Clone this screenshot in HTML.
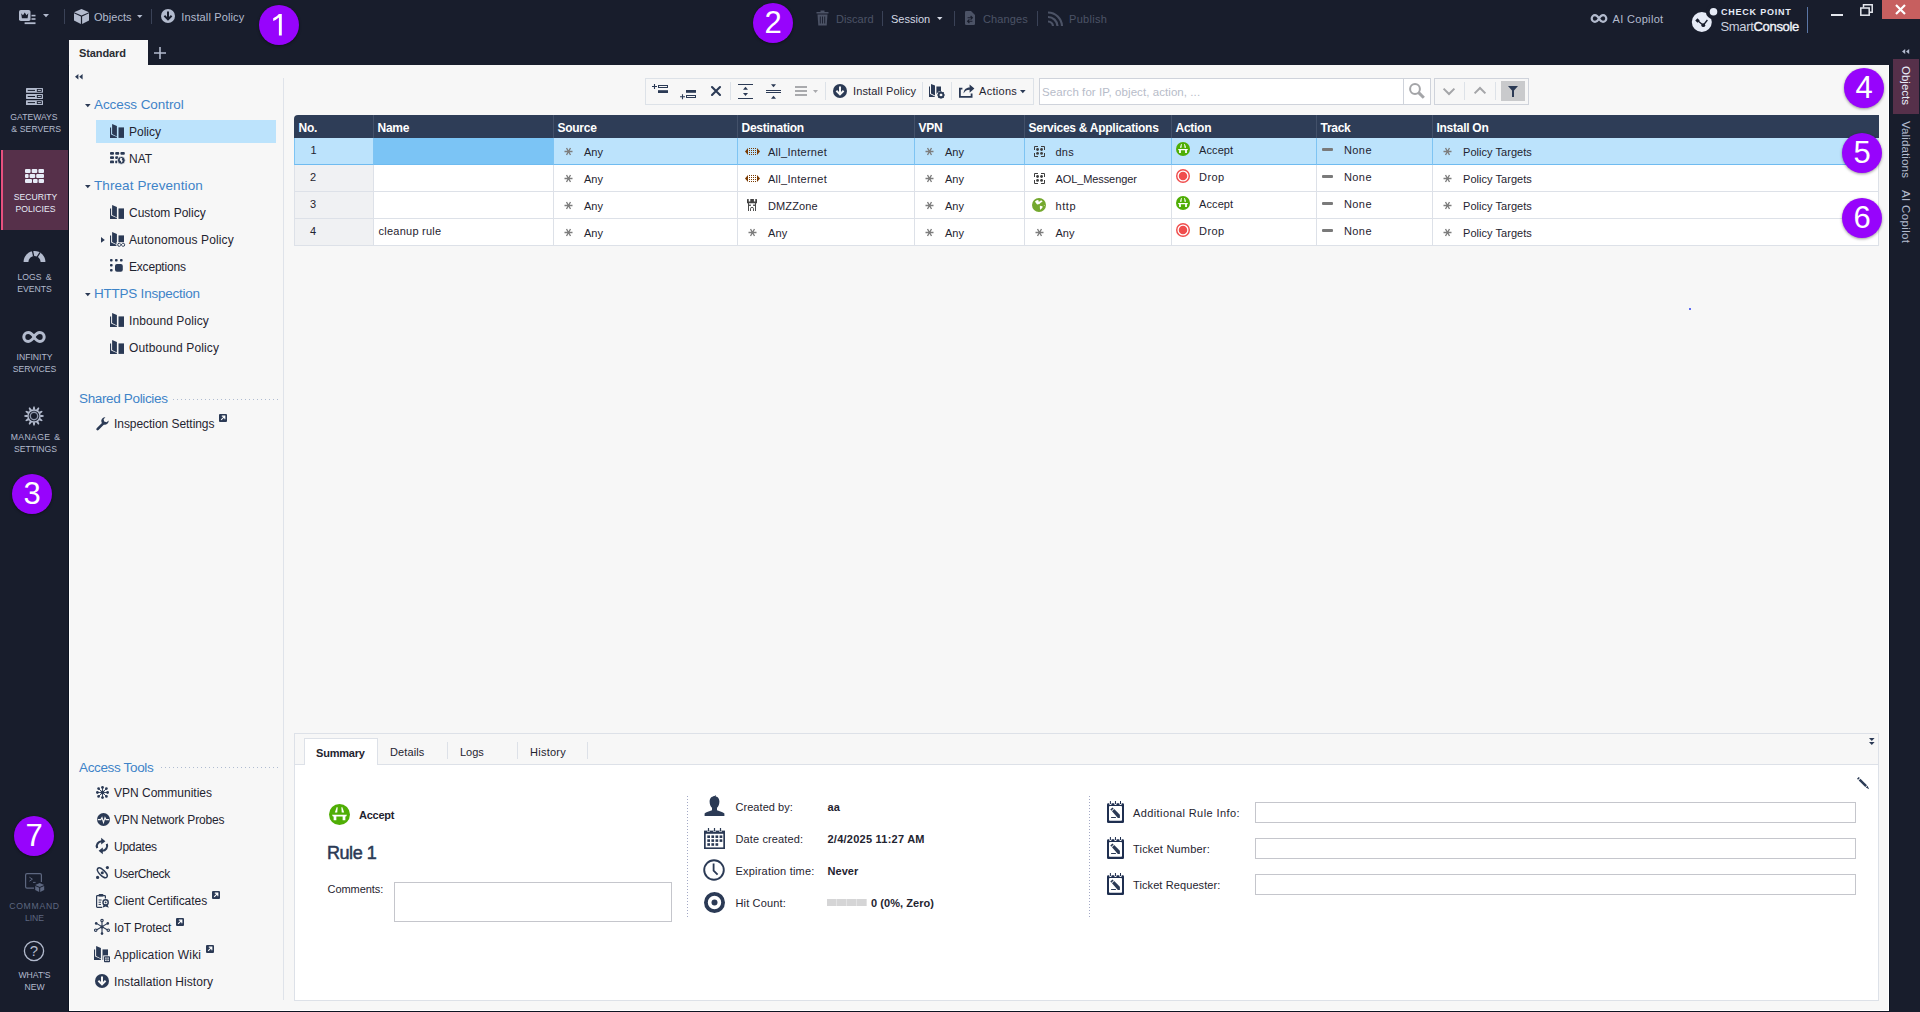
<!DOCTYPE html>
<html>
<head>
<meta charset="utf-8">
<title>SmartConsole</title>
<style>
*{box-sizing:border-box;margin:0;padding:0}
html,body{width:1920px;height:1012px;overflow:hidden}
body{background:#f7f7f7;font-family:"Liberation Sans",sans-serif;font-size:12px;color:#1f2430;position:relative}
.abs{position:absolute}
.t{position:absolute;white-space:nowrap;font-size:11px;line-height:14px;letter-spacing:0.05px}
svg{position:absolute;overflow:visible}
/* dark chrome */
#top{left:0;top:0;width:1920px;height:65px;background:#181d2c}
#left{left:0;top:65px;width:69px;height:947px;background:#181d2c}
#right{left:1889px;top:65px;width:31px;height:947px;background:#181d2c}
#bottom{left:69px;top:1011px;width:1820px;height:1px;background:#0d1422}
#wl{left:69px;top:65px;width:1px;height:946px;background:#fff}
#wb{left:69px;top:1010px;width:1820px;height:1px;background:#fff}
#wr{left:1888px;top:65px;width:1px;height:946px;background:#fff}
.vt{writing-mode:vertical-rl;font-size:11.5px;line-height:14px;white-space:nowrap;width:14px}
.tl{color:#b3bbce}
.td{color:#4c5366}
.vsep{position:absolute;width:1px;background:#3a4257}
.badge{position:absolute;width:40px;height:40px;border-radius:50%;background:#9704fc;color:#fff;font-size:31px;line-height:40px;text-align:center;box-shadow:0 1px 3px rgba(0,0,0,.4)}
/* sidebar */
.sb{position:absolute;left:0;width:69px;text-align:center;color:#b3bbce;font-size:9.6px;line-height:12px;letter-spacing:0;word-spacing:2px;white-space:nowrap;transform:scaleX(0.9);transform-origin:34.5px 0}
/* nav */
.hd{position:absolute;white-space:nowrap;color:#3e83c8;font-size:13.5px;line-height:16px;letter-spacing:0}
.ni{position:absolute;white-space:nowrap;color:#1f2430;font-size:12px;line-height:15px;letter-spacing:0}
.dots{position:absolute;height:1px;background-image:linear-gradient(to right,#b0bcd1 1px,transparent 1px);background-size:4px 1px}
/* table */
.th{position:absolute;top:115px;height:23px;background:#2e3d57;color:#fff;font-weight:bold;font-size:12px;line-height:23px;padding-left:4px;white-space:nowrap;letter-spacing:-0.3px;border-left:1px solid #44536c}
.cell{position:absolute;height:27px;background:#fff;border-left:1px solid #dde1e8;border-bottom:1px solid #dde1e8}
.sel .cell{background:#bce3fc;border-left-color:#7ec4f3;border-bottom-color:#6fbbf0}
.ct{position:absolute;white-space:nowrap;font-size:11px;line-height:14px;letter-spacing:0;color:#1f2430}
</style>
</head>
<body>
<div id="top" class="abs"></div>
<div id="left" class="abs"></div>
<div id="right" class="abs"></div>
<div id="bottom" class="abs"></div>
<div class="abs" style="left:68px;top:65px;width:1px;height:947px;background:#0d1422"></div><div class="abs" style="left:1889px;top:65px;width:1px;height:947px;background:#0d1422"></div><div id="wl" class="abs"></div><div id="wb" class="abs"></div><div id="wr" class="abs"></div>
<!-- top-left menu -->
<svg style="left:19px;top:10px" width="17" height="15" viewBox="0 0 17 15">
  <rect x="0" y="0" width="11.5" height="11" rx="1.8" fill="#b3bbce"/>
  <path d="M2.2 3.3L4 5.2L5.75 2.6L7.5 5.2L9.3 3.3L8.6 8.3H2.9Z" fill="#181d2c"/>
  <rect x="12.5" y="4.8" width="4" height="1.6" fill="#b3bbce"/>
  <rect x="12.5" y="8.2" width="4" height="1.6" fill="#b3bbce"/>
  <rect x="5.6" y="12.3" width="10.9" height="1.8" fill="#b3bbce"/>
</svg>
<svg style="left:43px;top:14px" width="6" height="4" viewBox="0 0 6 4"><path d="M0 0H6L3 3.2Z" fill="#b3bbce"/></svg>
<div class="vsep" style="left:64px;top:9px;height:15px"></div>
<svg style="left:74px;top:9px" width="15" height="15" viewBox="0 0 15 15">
  <path d="M7.5 0 L15 3.2 L7.5 6.6 L0 3.2 Z" fill="#b3bbce"/>
  <path d="M0 4.3 L6.9 7.5 L6.9 15 L0 11.6 Z" fill="#b3bbce"/>
  <path d="M15 4.3 L8.1 7.5 L8.1 15 L15 11.6 Z" fill="#b3bbce"/>
</svg>
<div class="t tl" style="left:94px;top:10px">Objects</div>
<svg style="left:137px;top:15px" width="6" height="4" viewBox="0 0 6 4"><path d="M0 0H5.5L2.75 3Z" fill="#b3bbce"/></svg>
<div class="vsep" style="left:151px;top:9px;height:15px"></div>
<svg style="left:161px;top:9px" width="14" height="14" viewBox="0 0 14 14">
  <circle cx="7" cy="7" r="7" fill="#b3bbce"/>
  <path d="M7 2.6V10.2M3.4 6.8L7 10.4L10.6 6.8" fill="none" stroke="#181d2c" stroke-width="2"/>
</svg>
<div class="t tl" style="left:181.3px;top:10px;letter-spacing:0.14px">Install Policy</div>
<!-- tab -->
<div class="abs" style="left:69px;top:40px;width:79px;height:26px;background:#f7f7f7"></div>
<div class="t" style="left:79px;top:46px;font-weight:bold;color:#2a2d33;letter-spacing:-0.1px">Standard</div>
<svg style="left:154px;top:47px" width="12" height="12" viewBox="0 0 12 12"><path d="M6 0V12M0 6H12" stroke="#b3bbce" stroke-width="1.6" fill="none"/></svg>
<!-- center -->
<svg style="left:816px;top:10px" width="13" height="16" viewBox="0 0 13 16">
  <path d="M4.5 0.5H8.5V2H12.5V3.6H0.5V2H4.5Z" fill="#4c5366"/>
  <path d="M1.5 4.6H11.5L10.7 15.5H2.3Z" fill="#4c5366"/>
  <path d="M4.3 6.5V13.5M6.5 6.5V13.5M8.7 6.5V13.5" stroke="#181d2c" stroke-width="0.9"/>
</svg>
<div class="t td" style="left:836px;top:12px">Discard</div>
<div class="vsep" style="left:882px;top:11px;height:15px"></div>
<div class="t" style="left:891px;top:12px;color:#d5d9e4;letter-spacing:0px">Session</div>
<svg style="left:937px;top:17px" width="6" height="4" viewBox="0 0 6 4"><path d="M0 0H5.5L2.75 3Z" fill="#d5d9e4"/></svg>
<div class="vsep" style="left:954px;top:11px;height:15px"></div>
<svg style="left:965px;top:11px" width="10" height="14" viewBox="0 0 10 14">
  <path d="M0 1.2Q0 0 1.2 0H6L10 4V12.8Q10 14 8.8 14H1.2Q0 14 0 12.8Z" fill="#4c5366"/>
  <path d="M2.6 6.8H7.4M5.6 5L7.4 6.8L5.6 8.6M7.4 10.2H2.6M4.4 8.4L2.6 10.2L4.4 12" stroke="#181d2c" stroke-width="1.1" fill="none"/>
</svg>
<div class="t td" style="left:983px;top:12px;letter-spacing:0.12px">Changes</div>
<div class="vsep" style="left:1037px;top:11px;height:15px"></div>
<svg style="left:1047px;top:11px" width="17" height="15" viewBox="0 0 17 15">
  <path d="M1 1.5 A14 14 0 0 1 15 15" stroke="#4c5366" stroke-width="2.2" fill="none"/>
  <path d="M1 6 A9.5 9.5 0 0 1 10.5 15" stroke="#4c5366" stroke-width="2.2" fill="none"/>
  <path d="M1 10.5 A5 5 0 0 1 6 15" stroke="#4c5366" stroke-width="2.2" fill="none"/>
</svg>
<div class="t td" style="left:1069px;top:12px;letter-spacing:0.3px">Publish</div>
<!-- right -->
<svg style="left:1591px;top:14px" width="16" height="9" viewBox="0 0 16 9">
  <path d="M8 4.5C6.5 2 5.5 1.2 4 1.2A3.3 3.3 0 0 0 4 7.8C5.5 7.8 6.5 7 8 4.5C9.5 2 10.5 1.2 12 1.2A3.3 3.3 0 0 1 12 7.8C10.5 7.8 9.5 7 8 4.5Z" fill="none" stroke="#b3bbce" stroke-width="2.2"/>
</svg>
<div class="t tl" style="left:1612.5px;top:12px;letter-spacing:0.33px">AI Copilot</div>
<svg style="left:1691px;top:7px" width="27" height="27" viewBox="0 0 27 27">
  <circle cx="10.8" cy="15" r="10" fill="#e6ebf7"/>
  <circle cx="22.5" cy="4.7" r="7.6" fill="#181d2c"/>
  <circle cx="22.5" cy="4.7" r="3.8" fill="#e6ebf7"/>
  <path d="M6.5 13.4L12.3 18.2L16.4 13" stroke="#181d2c" stroke-width="1.3" fill="none"/>
  <rect x="4.9" y="11.8" width="3.2" height="3.2" transform="rotate(45 6.5 13.4)" fill="#181d2c"/><circle cx="12.3" cy="18.2" r="1.9" fill="#181d2c"/>
</svg>
<div class="t" style="left:1721px;top:6px;color:#e6ebf7;font-weight:bold;font-size:9px;line-height:12px;letter-spacing:0.78px">CHECK POINT</div>
<div class="t" style="left:1720.5px;top:18.5px;color:#c9cfde;font-size:13px;line-height:16px;letter-spacing:-0.33px">Smart<span style="color:#f1f4fa;-webkit-text-stroke:0.35px #f1f4fa">Console</span></div>
<div class="vsep" style="left:1807px;top:7px;height:26px;background:#5a76a6"></div>
<div class="abs" style="left:1831px;top:14px;width:12px;height:2px;background:#e4e7ee"></div>
<svg style="left:1860px;top:4px" width="13" height="12" viewBox="0 0 13 12"><path d="M3.5 3.5V0.8H12.2V8.2H9.2" fill="none" stroke="#e4e7ee" stroke-width="1.5"/><rect x="0.8" y="4" width="8.4" height="7.2" fill="none" stroke="#e4e7ee" stroke-width="1.5"/></svg>
<div class="abs" style="left:1882px;top:0;width:38px;height:19px;background:#c75f5f"></div>
<svg style="left:1895px;top:4px" width="11" height="11" viewBox="0 0 11 11"><path d="M1 1L10 10M10 1L1 10" stroke="#fff" stroke-width="2.2"/></svg>

<!-- gateways -->
<svg style="left:26px;top:88px" width="17" height="17" viewBox="0 0 17 17">
  <g fill="#b3bbce"><rect x="0" y="0" width="17" height="4.8" rx="0.6"/><rect x="0" y="6.1" width="17" height="4.8" rx="0.6"/><rect x="0" y="12.2" width="17" height="4.8" rx="0.6"/></g>
  <g fill="#181d2c"><rect x="1.7" y="1.9" width="7.3" height="1"/><rect x="1.7" y="8" width="7.3" height="1"/><rect x="1.7" y="14.1" width="7.3" height="1"/></g>
  <g fill="none" stroke="#181d2c" stroke-width="0.9"><rect x="11.3" y="1.4" width="4" height="2"/><rect x="11.3" y="7.5" width="4" height="2"/><rect x="11.3" y="13.6" width="4" height="2"/></g>
</svg>
<div class="sb" style="top:111px;left:-0.5px"><span style="position:relative;left:-0.6px">GATEWAYS</span><br><span style="word-spacing:0.5px;position:relative;left:1.8px">&amp; SERVERS</span></div>
<!-- security policies (active) -->
<div class="abs" style="left:1px;top:150px;width:67px;height:80px;background:#56304a"></div>
<div class="abs" style="left:1px;top:150px;width:2px;height:80px;background:#e8507f"></div>
<svg style="left:25px;top:169px" width="19" height="14" viewBox="0 0 19 14">
  <g fill="#e6ebf7"><rect x="0" y="0" width="5.6" height="4" rx="1"/><rect x="6.7" y="0" width="5.6" height="4" rx="1"/><rect x="13.4" y="0" width="5.6" height="4" rx="1"/>
  <rect x="0" y="5" width="3.6" height="4" rx="1"/><rect x="4.6" y="5" width="5.6" height="4" rx="1"/><rect x="11.2" y="5" width="7.8" height="4" rx="1"/>
  <rect x="0" y="10" width="7" height="4" rx="1"/><rect x="8" y="10" width="4.6" height="4" rx="1"/><rect x="13.6" y="10" width="5.4" height="4" rx="1"/></g>
</svg>
<div class="sb" style="top:191px;left:1px;color:#e6ebf7">SECURITY<br>POLICIES</div>
<!-- logs -->
<svg style="left:23px;top:250px" width="23" height="12" viewBox="0 0 23 12">
  <path d="M0.6 12 A10.9 10.9 0 0 1 22.4 12 L17.6 12 A6.1 6.1 0 0 0 5.4 12 Z" fill="#b3bbce"/>
  <path d="M9.3 0L10.7 6.5M17 2.5L14.2 7" stroke="#181d2c" stroke-width="1.3"/>
</svg>
<div class="sb" style="top:271px">LOGS &amp;<br>EVENTS</div>
<!-- infinity -->
<svg style="left:22px;top:331px" width="24" height="12" viewBox="0 0 24 12">
  <path d="M12 6C9.8 2.6 8.3 1.6 6.2 1.6A4.4 4.4 0 0 0 6.2 10.4C8.3 10.4 9.8 9.4 12 6C14.2 2.6 15.7 1.6 17.8 1.6A4.4 4.4 0 0 1 17.8 10.4C15.7 10.4 14.2 9.4 12 6Z" fill="none" stroke="#b3bbce" stroke-width="3"/>
</svg>
<div class="sb" style="top:351px">INFINITY<br>SERVICES</div>
<!-- manage -->
<svg style="left:24px;top:406px" width="20" height="20" viewBox="-10 -10 20 20">
  <g fill="#b3bbce"><path d="M-1.25 -6.2L-0.65 -9.6H0.65L1.25 -6.2Z" transform="rotate(0)"/><path d="M-1.25 -6.2L-0.65 -9.6H0.65L1.25 -6.2Z" transform="rotate(30)"/><path d="M-1.25 -6.2L-0.65 -9.6H0.65L1.25 -6.2Z" transform="rotate(60)"/><path d="M-1.25 -6.2L-0.65 -9.6H0.65L1.25 -6.2Z" transform="rotate(90)"/><path d="M-1.25 -6.2L-0.65 -9.6H0.65L1.25 -6.2Z" transform="rotate(120)"/><path d="M-1.25 -6.2L-0.65 -9.6H0.65L1.25 -6.2Z" transform="rotate(150)"/><path d="M-1.25 -6.2L-0.65 -9.6H0.65L1.25 -6.2Z" transform="rotate(180)"/><path d="M-1.25 -6.2L-0.65 -9.6H0.65L1.25 -6.2Z" transform="rotate(210)"/><path d="M-1.25 -6.2L-0.65 -9.6H0.65L1.25 -6.2Z" transform="rotate(240)"/><path d="M-1.25 -6.2L-0.65 -9.6H0.65L1.25 -6.2Z" transform="rotate(270)"/><path d="M-1.25 -6.2L-0.65 -9.6H0.65L1.25 -6.2Z" transform="rotate(300)"/><path d="M-1.25 -6.2L-0.65 -9.6H0.65L1.25 -6.2Z" transform="rotate(330)"/></g>
  <circle r="6" fill="none" stroke="#b3bbce" stroke-width="1.3"/>
  <circle r="3.7" fill="none" stroke="#8e96aa" stroke-width="1.4"/>
</svg>
<div class="sb" style="top:431px;left:0.5px"><span style="word-spacing:1px;letter-spacing:0.45px">MANAGE &amp;</span><br>SETTINGS</div>
<!-- command line -->
<svg style="left:25px;top:873px" width="20" height="20" viewBox="0 0 20 20">
  <path d="M9 15.2H2Q0.6 15.2 0.6 13.8V2Q0.6 0.6 2 0.6H15Q16.4 0.6 16.4 2V9" fill="none" stroke="#5d6780" stroke-width="1.2"/>
  <path d="M4.4 4.2L7.4 6.2L4.4 8.2M8 9.4H10.6" fill="none" stroke="#5d6780" stroke-width="1"/>
  <path d="M14.7 10L19.2 12L14.7 14L10.2 12Z" fill="#5d6780"/><path d="M10.2 12.9L14.2 14.8V19L10.2 17Z" fill="#5d6780"/><path d="M19.2 12.9L15.2 14.8V19L19.2 17Z" fill="#5d6780"/>
</svg>
<div class="sb" style="top:900px;left:-0.5px;color:#5d6780"><span style="letter-spacing:0.8px">COMMAND</span><br>LINE</div>
<!-- whats new -->
<svg style="left:23px;top:940px" width="22" height="22" viewBox="0 0 22 22">
  <circle cx="11" cy="11" r="9.6" fill="none" stroke="#b3bbce" stroke-width="1.3"/>
</svg>
<div class="abs" style="left:23px;top:942px;width:22px;text-align:center;color:#b3bbce;font-size:15px;line-height:18px">?</div>
<div class="sb" style="top:969px">WHAT'S<br>NEW</div>

<svg width="0" height="0" style="left:0;top:0"><defs>
  <g id="book"><path d="M0 3.4H1.1V10.4L6.9 13.1V13.9H0Z"/><path d="M2.1 0L6.9 2V12.4L2.1 10.1Z"/><rect x="8.5" y="3.4" width="5.5" height="10.5"/></g>
  <g id="ext"><rect x="0" y="0" width="7.4" height="7.4" rx="1" fill="#2b3a55"/><path d="M2 5.4L5.2 2.2M2.6 2H5.4V4.8" fill="none" stroke="#fff" stroke-width="1"/></g>
  <g id="dl"><circle cx="7" cy="7" r="7"/><path d="M7 2.6V10.2M3.4 6.8L7 10.4L10.6 6.8" fill="none" stroke="#f7f7f7" stroke-width="2"/></g>
</defs></svg>
<div class="abs" style="left:283px;top:78px;width:1px;height:922px;background:#dfe3ea"></div>
<svg style="left:75px;top:74px" width="8" height="6" viewBox="0 0 8 6"><path d="M3.4 0V5.4L0 2.7ZM7.6 0V5.4L4.2 2.7Z" fill="#2b3a55"/></svg>
<!-- Access Control -->
<svg style="left:85px;top:104px" width="6" height="4" viewBox="0 0 6 4"><path d="M0 0H5.6L2.8 3.2Z" fill="#2b3a55"/></svg>
<div class="hd" style="left:94px;top:97px;letter-spacing:-0.08px">Access Control</div>
<div class="abs" style="left:96px;top:120px;width:180px;height:23px;background:#bce3fc"></div>
<svg style="left:110px;top:124px" width="14" height="14" viewBox="0 0 14 14" fill="#2b3a55"><use href="#book"/></svg>
<div class="ni" style="left:129px;top:125px">Policy</div>
<svg style="left:110px;top:152px" width="15" height="13" viewBox="0 0 15 13" fill="#2b3a55">
  <rect x="0" y="0" width="4" height="2.7" rx="0.9"/><rect x="5.2" y="0" width="4" height="2.7" rx="0.9"/><rect x="10.4" y="0" width="4.4" height="2.7" rx="0.9"/>
  <rect x="0" y="4.3" width="4" height="2.7" rx="0.9"/><rect x="5.2" y="4.3" width="3" height="2.7" rx="0.9"/>
  <rect x="0" y="8.6" width="4" height="2.7" rx="0.9"/><rect x="5.2" y="8.6" width="2" height="2.7" rx="0.9"/>
  <circle cx="11.3" cy="8.3" r="3.9" stroke="#f7f7f7" stroke-width="0.7"/>
  <path d="M10.6 5.6L12.3 6.4L11.7 7.8L12.8 8.8L11.6 11L10.8 9L9.6 8.2Z" fill="#f7f7f7"/>
</svg>
<div class="ni" style="left:129px;top:152px">NAT</div>
<!-- Threat Prevention -->
<svg style="left:85px;top:185px" width="6" height="4" viewBox="0 0 6 4"><path d="M0 0H5.6L2.8 3.2Z" fill="#2b3a55"/></svg>
<div class="hd" style="left:94px;top:178px;letter-spacing:0.09px">Threat Prevention</div>
<svg style="left:110px;top:205px" width="14" height="14" viewBox="0 0 14 14" fill="#2b3a55"><use href="#book"/></svg>
<div class="ni" style="left:129px;top:206px">Custom Policy</div>
<svg style="left:101px;top:237px" width="4" height="6" viewBox="0 0 4 6"><path d="M0 0L3.8 2.9L0 5.8Z" fill="#2b3a55"/></svg>
<svg style="left:110px;top:232px" width="16" height="15" viewBox="0 0 16 15" fill="#2b3a55"><use href="#book"/>
  <rect x="6.5" y="10.2" width="9.5" height="5" fill="#f7f7f7"/>
  <path d="M11.2 12.8C10.4 11.6 9.9 11.3 9.2 11.3A1.5 1.5 0 0 0 9.2 14.3C9.9 14.3 10.4 14 11.2 12.8C12 11.6 12.5 11.3 13.2 11.3A1.5 1.5 0 0 1 13.2 14.3C12.5 14.3 12 14 11.2 12.8Z" fill="none" stroke="#2b3a55" stroke-width="1"/>
</svg>
<div class="ni" style="left:129px;top:233px;letter-spacing:0.12px">Autonomous Policy</div>
<svg style="left:110px;top:259px" width="13" height="13" viewBox="0 0 13 13" fill="#2b3a55">
  <rect x="0" y="0" width="2.6" height="2.6" rx="0.8"/><rect x="5" y="0" width="2.6" height="2.6" rx="0.8"/><rect x="10" y="0" width="2.6" height="2.6" rx="0.8"/>
  <rect x="0" y="5" width="2.6" height="2.6" rx="0.8"/><rect x="0" y="10" width="2.6" height="2.6" rx="0.8"/>
  <rect x="5" y="5" width="7.8" height="7.8" rx="2"/>
</svg>
<div class="ni" style="left:129px;top:260px;letter-spacing:-0.2px">Exceptions</div>
<!-- HTTPS Inspection -->
<svg style="left:85px;top:293px" width="6" height="4" viewBox="0 0 6 4"><path d="M0 0H5.6L2.8 3.2Z" fill="#2b3a55"/></svg>
<div class="hd" style="left:94px;top:286px;letter-spacing:-0.23px">HTTPS Inspection</div>
<svg style="left:110px;top:313px" width="14" height="14" viewBox="0 0 14 14" fill="#2b3a55"><use href="#book"/></svg>
<div class="ni" style="left:129px;top:314px;letter-spacing:0.08px">Inbound Policy</div>
<svg style="left:110px;top:340px" width="14" height="14" viewBox="0 0 14 14" fill="#2b3a55"><use href="#book"/></svg>
<div class="ni" style="left:129px;top:341px;letter-spacing:0.14px">Outbound Policy</div>
<!-- Shared Policies -->
<div class="hd" style="left:79px;top:391px;letter-spacing:-0.35px">Shared Policies</div>
<div class="dots" style="left:173px;top:399px;width:106px"></div>
<svg style="left:96px;top:417px" width="13" height="14" viewBox="0 0 13 14">
  <path d="M1.6 12.2L7.6 6.2" stroke="#2b3a55" stroke-width="2.6" stroke-linecap="round"/>
  <path d="M12.6 3.4A3.7 3.7 0 1 1 9.4 0.3L7.6 2.2L8.2 4.6L10.6 5.2Z" fill="#2b3a55"/>
</svg>
<div class="ni" style="left:114px;top:417px;letter-spacing:-0.05px">Inspection Settings</div>
<svg style="left:218.5px;top:414px" width="8" height="8" viewBox="0 0 7.4 7.4"><use href="#ext"/></svg>
<!-- Access Tools -->
<div class="hd" style="left:79px;top:760px;letter-spacing:-0.35px">Access Tools</div>
<div class="dots" style="left:161px;top:767px;width:118px"></div>
<svg style="left:96px;top:786px" width="13" height="13" viewBox="-6.5 -6.5 13 13">
  <g stroke="#2b3a55" stroke-width="0.9"><path d="M-5 0H5M0 -5V5M-3.6 -3.6L3.6 3.6M-3.6 3.6L3.6 -3.6"/></g>
  <g fill="#2b3a55"><rect x="-1.7" y="-1.7" width="3.4" height="3.4" rx="0.8"/><circle cx="0" cy="-5.1" r="1.4"/><circle cx="0" cy="5.1" r="1.4"/><circle cx="-5.1" cy="0" r="1.4"/><circle cx="5.1" cy="0" r="1.4"/><circle cx="-3.9" cy="-3.9" r="1.35"/><circle cx="3.9" cy="3.9" r="1.35"/><circle cx="-3.9" cy="3.9" r="1.35"/><circle cx="3.9" cy="-3.9" r="1.35"/></g>
</svg>
<div class="ni" style="left:114px;top:786px">VPN Communities</div>
<svg style="left:96.5px;top:812.5px" width="13" height="13" viewBox="0 0 13 13"><circle cx="6.5" cy="6.5" r="6.5" fill="#2b3a55"/><path d="M0.8 6.6H3.8L5 4.6L6.5 9.4L8 4.6L9 6.6H12.2" fill="none" stroke="#f7f7f7" stroke-width="1.1"/></svg>
<div class="ni" style="left:114px;top:813px;letter-spacing:-0.17px">VPN Network Probes</div>
<svg style="left:96px;top:838px" width="12" height="16" viewBox="0 0 12 16">
  <path d="M1.2 10.2A5 5 0 0 1 6 3.2" fill="none" stroke="#2b3a55" stroke-width="2.1"/><path d="M5.2 -0.2L9.4 3.2L5.2 6.6Z" fill="#2b3a55"/>
  <path d="M10.8 5.8A5 5 0 0 1 6 12.8" fill="none" stroke="#2b3a55" stroke-width="2.1"/><path d="M6.8 9.4L2.6 12.8L6.8 16.2Z" fill="#2b3a55"/>
</svg>
<div class="ni" style="left:114px;top:840px;letter-spacing:-0.27px">Updates</div>
<svg style="left:96px;top:866px" width="13" height="13" viewBox="0 0 13 13">
  <ellipse cx="6.3" cy="6.8" rx="2.7" ry="6.3" transform="rotate(-45 6.3 6.8)" fill="none" stroke="#2b3a55" stroke-width="1.5"/>
  <circle cx="6.3" cy="6.8" r="1.5" fill="#2b3a55"/><circle cx="11.4" cy="1.6" r="1.6" fill="#2b3a55"/><circle cx="1.6" cy="11.4" r="1.6" fill="#2b3a55"/>
</svg>
<div class="ni" style="left:114px;top:867px;letter-spacing:-0.4px">UserCheck</div>
<svg style="left:96px;top:894px" width="14" height="14" viewBox="0 0 14 14">
  <path d="M6 13.4H1.4Q0.6 13.4 0.6 12.6V2.4Q0.6 1.6 1.4 1.6H8.6Q9.4 1.6 9.4 2.4V4.6" fill="none" stroke="#2b3a55" stroke-width="1.2"/>
  <rect x="2.6" y="0" width="4.8" height="2.6" rx="0.8" fill="#2b3a55"/>
  <path d="M2.6 6H5.6M2.6 8.2H5M2.6 10.4H5" stroke="#2b3a55" stroke-width="1"/>
  <circle cx="9.6" cy="8.4" r="2.6" fill="none" stroke="#2b3a55" stroke-width="1.4"/><circle cx="9.6" cy="8.4" r="0.9" fill="#2b3a55"/>
  <path d="M7.8 10.6L6.4 13.8L9.6 12.4L12.8 13.8L11.4 10.6" fill="#2b3a55"/>
</svg>
<div class="ni" style="left:114px;top:894px;letter-spacing:-0.05px">Client Certificates</div>
<svg style="left:212px;top:891px" width="8" height="8" viewBox="0 0 7.4 7.4"><use href="#ext"/></svg>
<svg style="left:94px;top:919px" width="16" height="16" viewBox="-8 -8 16 16">
  <g stroke="#2b3a55" stroke-width="1.1" fill="none"><path d="M0 -5.6V6M-5.6 -3.6L5.6 3M5.6 -3.6L-5.6 3"/><circle cx="0" cy="-6.4" r="1.2" fill="#f7f7f7"/><circle cx="-6.3" cy="3.2" r="1.2" fill="#f7f7f7"/><circle cx="6.3" cy="3.2" r="1.2" fill="#f7f7f7"/></g>
  <g fill="#2b3a55"><circle r="1.6"/><circle cx="0" cy="6.6" r="1.3"/><circle cx="-5.8" cy="-3.6" r="1.3"/><circle cx="5.8" cy="-3.6" r="1.3"/></g>
</svg>
<div class="ni" style="left:114px;top:921px;letter-spacing:-0.12px">IoT Protect</div>
<svg style="left:176px;top:918px" width="8" height="8" viewBox="0 0 7.4 7.4"><use href="#ext"/></svg>
<svg style="left:94px;top:946px" width="16" height="16" viewBox="0 0 16 16" fill="#2b3a55"><use href="#book"/>
  <rect x="9.2" y="9.4" width="7" height="7" fill="#f7f7f7"/><rect x="10" y="10.2" width="6" height="6" rx="0.8"/>
  <path d="M11.2 11.4H12.6V12.8H11.2ZM13.4 11.4H14.8V12.8H13.4ZM11.2 13.6H12.6V15H11.2ZM13.4 13.6H14.8V15H13.4Z" fill="#f7f7f7"/>
</svg>
<div class="ni" style="left:114px;top:948px;letter-spacing:0.15px">Application Wiki</div>
<svg style="left:206px;top:945px" width="8" height="8" viewBox="0 0 7.4 7.4"><use href="#ext"/></svg>
<svg style="left:95px;top:974px" width="14" height="14" viewBox="0 0 14 14" fill="#2b3a55"><use href="#dl"/></svg>
<div class="ni" style="left:114px;top:975px;letter-spacing:0.05px">Installation History</div>

<div class="abs" style="left:645px;top:78px;width:389px;height:27px;border:1px solid #dde2e8"></div>
<svg style="left:652px;top:84px" width="16" height="10" viewBox="0 0 16 10">
  <path d="M2.5 0V5M0 2.5H5" stroke="#2b3a55" stroke-width="1.1" fill="none"/>
  <rect x="6.5" y="1.5" width="9" height="2" fill="none" stroke="#2b3a55" stroke-width="1"/>
  <rect x="6" y="6.2" width="10" height="2.8" fill="#2b3a55"/>
</svg>
<svg style="left:680px;top:90px" width="16" height="10" viewBox="0 0 16 10">
  <rect x="6" y="0" width="10" height="2.8" fill="#2b3a55"/>
  <rect x="6.5" y="5.5" width="9" height="2" fill="none" stroke="#2b3a55" stroke-width="1"/>
  <path d="M2.5 4.2V9.2M0 6.7H5" stroke="#2b3a55" stroke-width="1.1" fill="none"/>
</svg>
<svg style="left:711px;top:86px" width="10" height="10" viewBox="0 0 10 10"><path d="M1 1L9 9M9 1L1 9" stroke="#2b3a55" stroke-width="2.1" stroke-linecap="round"/></svg>
<div class="abs" style="left:730px;top:82px;width:1px;height:18px;background:#dde2e8"></div>
<svg style="left:738px;top:84px" width="15" height="15" viewBox="0 0 15 15" fill="#2b3a55">
  <rect x="0" y="0" width="15" height="1"/><rect x="0" y="14" width="15" height="1"/>
  <path d="M7.5 2.8L10 5.8H5Z"/><path d="M7.5 12L10 9H5Z"/>
</svg>
<svg style="left:766px;top:84px" width="15" height="15" viewBox="0 0 15 15" fill="#2b3a55">
  <rect x="0" y="6" width="15" height="1"/><rect x="0" y="8" width="15" height="1"/>
  <path d="M7.5 3.2L10 0.2H5Z"/><path d="M7.5 11.8L10 14.8H5Z"/>
</svg>
<svg style="left:795px;top:86px" width="24" height="10" viewBox="0 0 24 10" fill="#a9aaad">
  <rect x="0" y="0" width="12" height="2"/><rect x="0" y="4" width="12" height="2"/><rect x="0" y="8" width="12" height="2"/>
  <path d="M18 4H23L20.5 7Z"/>
</svg>
<div class="abs" style="left:825px;top:82px;width:1px;height:18px;background:#dde2e8"></div>
<svg style="left:833px;top:84px" width="14" height="14" viewBox="0 0 14 14" fill="#2b3a55"><use href="#dl"/></svg>
<div class="t" style="left:853px;top:84px;letter-spacing:0.15px">Install Policy</div>
<div class="abs" style="left:922px;top:82px;width:1px;height:18px;background:#dde2e8"></div>
<svg style="left:929px;top:84px" width="16" height="15" viewBox="0 0 16 15" fill="#2b3a55">
  <path d="M0 2.6H1V10L6 12.4V13H0Z"/><path d="M2 0L6 1.6V11.4L2 9.4Z"/><path d="M7.4 2.6H12V7.4H9.6L7.4 10Z"/>
  <circle cx="12" cy="11" r="2.6" fill="none" stroke="#2b3a55" stroke-width="1.5"/>
  <path d="M12 7.2V14.8M8.2 11H15.8M9.3 8.3L14.7 13.7M14.7 8.3L9.3 13.7" stroke="#2b3a55" stroke-width="1.1"/>
  <circle cx="12" cy="11" r="1.3" fill="#f7f7f7"/>
</svg>
<div class="abs" style="left:951px;top:82px;width:1px;height:18px;background:#dde2e8"></div>
<svg style="left:959px;top:84px" width="16" height="14" viewBox="0 0 16 14">
  <path d="M3.4 4.6H0.9V12.9H12.6V9.4" fill="none" stroke="#2b3a55" stroke-width="1.8"/>
  <path d="M4.6 9.6C4.6 5.6 7 3.4 10.6 3.4V0.4L15.4 4.6L10.6 8.8V5.8C8 5.8 6 6.8 4.6 9.6Z" fill="#2b3a55"/>
</svg>
<div class="t" style="left:979px;top:84px;letter-spacing:0.3px">Actions</div>
<svg style="left:1020px;top:90px" width="6" height="4" viewBox="0 0 6 4"><path d="M0 0H5.6L2.8 3.2Z" fill="#2b3a55"/></svg>
<!-- search -->
<div class="abs" style="left:1039px;top:78px;width:392px;height:27px;border:1px solid #cfd3db;background:#fff"></div>
<div class="abs" style="left:1403px;top:79px;width:1px;height:25px;background:#cfd3db"></div>
<div class="t" style="left:1042px;top:84.5px;font-size:11.5px;color:#b7bcc9;letter-spacing:0.07px">Search for IP, object, action, ...</div>
<svg style="left:1409px;top:83px" width="16" height="16" viewBox="0 0 16 16">
  <circle cx="6" cy="6" r="4.9" fill="none" stroke="#a4a5a8" stroke-width="2"/><path d="M9.4 9.4L14.8 14.8" stroke="#a4a5a8" stroke-width="3"/>
</svg>
<div class="abs" style="left:1434px;top:78px;width:95px;height:27px;border:1px solid #cfd3db"></div>
<svg style="left:1443px;top:88px" width="12" height="7" viewBox="0 0 12 7"><path d="M0.6 0.6L6 6L11.4 0.6" fill="none" stroke="#a4a5a8" stroke-width="2"/></svg>
<div class="abs" style="left:1464px;top:82px;width:1px;height:18px;background:#dde2e8"></div>
<svg style="left:1474px;top:87px" width="12" height="7" viewBox="0 0 12 7"><path d="M0.6 6.4L6 1L11.4 6.4" fill="none" stroke="#a4a5a8" stroke-width="2"/></svg>
<div class="abs" style="left:1495px;top:82px;width:1px;height:18px;background:#dde2e8"></div>
<div class="abs" style="left:1501px;top:81px;width:24px;height:20px;background:#c9cacc"></div>
<svg style="left:1508px;top:86px" width="10" height="11" viewBox="0 0 10 11"><path d="M0 0H10L6 4.6V11H4V4.6Z" fill="#2b3a55"/></svg>

<!--TABLE_START--><div class="abs" style="left:294px;top:115px;width:1585px;height:23px;background:#2e3d57;border-radius:4px 0 0 0"></div>
<div class="t" style="left:298.5px;top:120.5px;color:#fff;font-weight:bold;font-size:12px;line-height:15px;letter-spacing:-0.27px">No.</div>
<div class="abs" style="left:373px;top:115px;width:1px;height:23px;background:#43516a"></div><div class="t" style="left:377.5px;top:120.5px;color:#fff;font-weight:bold;font-size:12px;line-height:15px;letter-spacing:-0.27px">Name</div>
<div class="abs" style="left:553px;top:115px;width:1px;height:23px;background:#43516a"></div><div class="t" style="left:557.5px;top:120.5px;color:#fff;font-weight:bold;font-size:12px;line-height:15px;letter-spacing:-0.27px">Source</div>
<div class="abs" style="left:737px;top:115px;width:1px;height:23px;background:#43516a"></div><div class="t" style="left:741.5px;top:120.5px;color:#fff;font-weight:bold;font-size:12px;line-height:15px;letter-spacing:-0.27px">Destination</div>
<div class="abs" style="left:914px;top:115px;width:1px;height:23px;background:#43516a"></div><div class="t" style="left:918.5px;top:120.5px;color:#fff;font-weight:bold;font-size:12px;line-height:15px;letter-spacing:-0.27px">VPN</div>
<div class="abs" style="left:1024px;top:115px;width:1px;height:23px;background:#43516a"></div><div class="t" style="left:1028.5px;top:120.5px;color:#fff;font-weight:bold;font-size:12px;line-height:15px;letter-spacing:-0.27px">Services &amp; Applications</div>
<div class="abs" style="left:1171px;top:115px;width:1px;height:23px;background:#43516a"></div><div class="t" style="left:1175.5px;top:120.5px;color:#fff;font-weight:bold;font-size:12px;line-height:15px;letter-spacing:-0.27px">Action</div>
<div class="abs" style="left:1316px;top:115px;width:1px;height:23px;background:#43516a"></div><div class="t" style="left:1320.5px;top:120.5px;color:#fff;font-weight:bold;font-size:12px;line-height:15px;letter-spacing:-0.27px">Track</div>
<div class="abs" style="left:1432px;top:115px;width:1px;height:23px;background:#43516a"></div><div class="t" style="left:1436.5px;top:120.5px;color:#fff;font-weight:bold;font-size:12px;line-height:15px;letter-spacing:-0.27px">Install On</div>
<div class="sel">
<div class="cell" style="left:294px;top:138px;width:79px;background:#bce3fc"></div>
<div class="cell" style="left:373px;top:138px;width:180px;background:#7bc4f5"></div>
<div class="cell" style="left:553px;top:138px;width:184px;"></div>
<div class="cell" style="left:737px;top:138px;width:177px;"></div>
<div class="cell" style="left:914px;top:138px;width:110px;"></div>
<div class="cell" style="left:1024px;top:138px;width:147px;"></div>
<div class="cell" style="left:1171px;top:138px;width:145px;"></div>
<div class="cell" style="left:1316px;top:138px;width:116px;"></div>
<div class="cell" style="left:1432px;top:138px;width:447px;"></div>
</div>
<div class="ct" style="left:310.5px;top:142.8px">1</div>
<svg style="left:563.5px;top:147px" width="9" height="9" viewBox="-4.5 -4.5 9 9"><path d="M-4 0H4M-2 -3.5L2 3.5M2 -3.5L-2 3.5" stroke="#7d7d7d" stroke-width="1.35"/></svg>
<div class="ct" style="left:584px;top:145.2px">Any</div>
<svg style="left:745px;top:148px" width="15" height="7" viewBox="0 0 15 7" fill="#7a3a00"><path d="M0 3.5L3 0V7Z"/><path d="M15 3.5L12 0V7Z"/><rect x="4" y="0" width="1" height="1"/><rect x="4" y="2" width="1" height="1"/><rect x="4" y="4" width="1" height="1"/><rect x="4" y="6" width="1" height="1"/><rect x="6" y="0" width="1" height="1"/><rect x="6" y="2" width="1" height="1"/><rect x="6" y="4" width="1" height="1"/><rect x="6" y="6" width="1" height="1"/><rect x="8" y="0" width="1" height="1"/><rect x="8" y="2" width="1" height="1"/><rect x="8" y="4" width="1" height="1"/><rect x="8" y="6" width="1" height="1"/><rect x="10" y="0" width="1" height="1"/><rect x="10" y="2" width="1" height="1"/><rect x="10" y="4" width="1" height="1"/><rect x="10" y="6" width="1" height="1"/></svg>
<div class="ct" style="left:768px;top:145.2px;letter-spacing:0.28px">All_Internet</div>
<svg style="left:924.5px;top:147px" width="9" height="9" viewBox="-4.5 -4.5 9 9"><path d="M-4 0H4M-2 -3.5L2 3.5M2 -3.5L-2 3.5" stroke="#7d7d7d" stroke-width="1.35"/></svg>
<div class="ct" style="left:945px;top:145.2px">Any</div>
<svg style="left:1034px;top:146px" width="11" height="11" viewBox="0 0 11 11"><path d="M4 0.5H0.5V4M7 0.5H10.5V4M4 10.5H0.5V7M7 10.5H10.5V7" fill="none" stroke="#3d3d3d" stroke-width="1"/><g fill="#3d3d3d"><circle cx="3.55" cy="3.5" r="1.4"/><circle cx="7.55" cy="3.5" r="1.4"/><circle cx="3.55" cy="7.45" r="1.4"/><circle cx="7.55" cy="7.45" r="1.4"/></g></svg>
<div class="ct" style="left:1055.5px;top:145.2px;letter-spacing:0.25px">dns</div>
<svg style="left:1176px;top:142px" width="14" height="14" viewBox="0 0 14 14"><circle cx="7" cy="7" r="7" fill="#4fae05"/><path d="M5.1 2.1H5.8L5.5 5.7H3.9Z" fill="#fff"/><path d="M8.2 2.1H8.9L10.1 5.7H8.5Z" fill="#fff"/><path d="M2 7.1H12L11.4 8.3H10.9V10.9H9.1V8.3H4.9V10.9H3.1V8.3H2.6Z" fill="#fff"/></svg>
<div class="ct" style="left:1199px;top:142.8px;letter-spacing:0.1px">Accept</div>
<div class="abs" style="left:1322px;top:148px;width:11px;height:3px;background:#7a7a7a;border-radius:1px"></div>
<div class="ct" style="left:1344px;top:142.8px;letter-spacing:0.4px">None</div>
<svg style="left:1442.5px;top:147px" width="9" height="9" viewBox="-4.5 -4.5 9 9"><path d="M-4 0H4M-2 -3.5L2 3.5M2 -3.5L-2 3.5" stroke="#7d7d7d" stroke-width="1.35"/></svg>
<div class="ct" style="left:1463px;top:145.2px;letter-spacing:0.04px">Policy Targets</div>
<div class="row">
<div class="cell" style="left:294px;top:165px;width:79px;background:#f0f1f3"></div>
<div class="cell" style="left:373px;top:165px;width:180px;"></div>
<div class="cell" style="left:553px;top:165px;width:184px;"></div>
<div class="cell" style="left:737px;top:165px;width:177px;"></div>
<div class="cell" style="left:914px;top:165px;width:110px;"></div>
<div class="cell" style="left:1024px;top:165px;width:147px;"></div>
<div class="cell" style="left:1171px;top:165px;width:145px;"></div>
<div class="cell" style="left:1316px;top:165px;width:116px;"></div>
<div class="cell" style="left:1432px;top:165px;width:447px;"></div>
</div>
<div class="ct" style="left:310px;top:169.8px">2</div>
<svg style="left:563.5px;top:174px" width="9" height="9" viewBox="-4.5 -4.5 9 9"><path d="M-4 0H4M-2 -3.5L2 3.5M2 -3.5L-2 3.5" stroke="#7d7d7d" stroke-width="1.35"/></svg>
<div class="ct" style="left:584px;top:172.2px">Any</div>
<svg style="left:745px;top:175px" width="15" height="7" viewBox="0 0 15 7" fill="#7a3a00"><path d="M0 3.5L3 0V7Z"/><path d="M15 3.5L12 0V7Z"/><rect x="4" y="0" width="1" height="1"/><rect x="4" y="2" width="1" height="1"/><rect x="4" y="4" width="1" height="1"/><rect x="4" y="6" width="1" height="1"/><rect x="6" y="0" width="1" height="1"/><rect x="6" y="2" width="1" height="1"/><rect x="6" y="4" width="1" height="1"/><rect x="6" y="6" width="1" height="1"/><rect x="8" y="0" width="1" height="1"/><rect x="8" y="2" width="1" height="1"/><rect x="8" y="4" width="1" height="1"/><rect x="8" y="6" width="1" height="1"/><rect x="10" y="0" width="1" height="1"/><rect x="10" y="2" width="1" height="1"/><rect x="10" y="4" width="1" height="1"/><rect x="10" y="6" width="1" height="1"/></svg>
<div class="ct" style="left:768px;top:172.2px;letter-spacing:0.28px">All_Internet</div>
<svg style="left:924.5px;top:174px" width="9" height="9" viewBox="-4.5 -4.5 9 9"><path d="M-4 0H4M-2 -3.5L2 3.5M2 -3.5L-2 3.5" stroke="#7d7d7d" stroke-width="1.35"/></svg>
<div class="ct" style="left:945px;top:172.2px">Any</div>
<svg style="left:1034px;top:173px" width="11" height="11" viewBox="0 0 11 11"><path d="M4 0.5H0.5V4M7 0.5H10.5V4M4 10.5H0.5V7M7 10.5H10.5V7" fill="none" stroke="#3d3d3d" stroke-width="1"/><g fill="#3d3d3d"><circle cx="3.55" cy="3.5" r="1.4"/><circle cx="7.55" cy="3.5" r="1.4"/><circle cx="3.55" cy="7.45" r="1.4"/><circle cx="7.55" cy="7.45" r="1.4"/></g></svg>
<div class="ct" style="left:1055.5px;top:172.2px;letter-spacing:-0.1px">AOL_Messenger</div>
<svg style="left:1176px;top:169px" width="14" height="14" viewBox="0 0 14 14"><circle cx="7" cy="7" r="7" fill="#f04d4d"/><circle cx="7" cy="7" r="4.9" fill="none" stroke="#fff" stroke-width="1.3"/></svg>
<div class="ct" style="left:1199px;top:169.8px;letter-spacing:0.45px">Drop</div>
<div class="abs" style="left:1322px;top:175px;width:11px;height:3px;background:#7a7a7a;border-radius:1px"></div>
<div class="ct" style="left:1344px;top:169.8px;letter-spacing:0.4px">None</div>
<svg style="left:1442.5px;top:174px" width="9" height="9" viewBox="-4.5 -4.5 9 9"><path d="M-4 0H4M-2 -3.5L2 3.5M2 -3.5L-2 3.5" stroke="#7d7d7d" stroke-width="1.35"/></svg>
<div class="ct" style="left:1463px;top:172.2px;letter-spacing:0.04px">Policy Targets</div>
<div class="row">
<div class="cell" style="left:294px;top:192px;width:79px;background:#f0f1f3"></div>
<div class="cell" style="left:373px;top:192px;width:180px;"></div>
<div class="cell" style="left:553px;top:192px;width:184px;"></div>
<div class="cell" style="left:737px;top:192px;width:177px;"></div>
<div class="cell" style="left:914px;top:192px;width:110px;"></div>
<div class="cell" style="left:1024px;top:192px;width:147px;"></div>
<div class="cell" style="left:1171px;top:192px;width:145px;"></div>
<div class="cell" style="left:1316px;top:192px;width:116px;"></div>
<div class="cell" style="left:1432px;top:192px;width:447px;"></div>
</div>
<div class="ct" style="left:310px;top:196.8px">3</div>
<svg style="left:563.5px;top:201px" width="9" height="9" viewBox="-4.5 -4.5 9 9"><path d="M-4 0H4M-2 -3.5L2 3.5M2 -3.5L-2 3.5" stroke="#7d7d7d" stroke-width="1.35"/></svg>
<div class="ct" style="left:584px;top:199.2px">Any</div>
<svg style="left:747px;top:199px" width="10" height="12" viewBox="0 0 10 12" fill="#414141"><path d="M0 0.6Q0 0 0.6 0H1.7V2.6H3.3V0H6.9V2.6H8.3V0H9.4Q10 0 10 0.6V4.2H0Z"/><rect x="1" y="4" width="0.95" height="8"/><rect x="8.05" y="4" width="0.95" height="8"/><rect x="1.9" y="5.6" width="2" height="1.3"/><rect x="6.1" y="5.6" width="2" height="1.3"/><path d="M3.5 12V9.8A1.5 1.5 0 0 1 6.5 9.8V12" fill="none" stroke="#414141" stroke-width="0.9"/></svg>
<div class="ct" style="left:768px;top:199.2px;letter-spacing:0.1px">DMZZone</div>
<svg style="left:924.5px;top:201px" width="9" height="9" viewBox="-4.5 -4.5 9 9"><path d="M-4 0H4M-2 -3.5L2 3.5M2 -3.5L-2 3.5" stroke="#7d7d7d" stroke-width="1.35"/></svg>
<div class="ct" style="left:945px;top:199.2px">Any</div>
<svg style="left:1032.3px;top:198px" width="14" height="14" viewBox="0 0 14 14"><circle cx="7" cy="7" r="7" fill="#74a82e"/><path d="M2.96 3.56L4.74 2.17L6.3 2L6.7 3.75L7.9 3.36L9.1 2.2L10.7 3.56L8.7 4.7L7.5 5.9L6.3 6.3L5.1 6.5L3.75 4.7Z" fill="#fff"/><path d="M7.9 7.7L9.5 7.9L10.9 8.7L9.5 10.7L8.1 11.7L7.9 9.9Z" fill="#fff"/><circle cx="12.25" cy="7.4" r="0.5" fill="#cfe2b0"/></svg>
<div class="ct" style="left:1055.5px;top:199.2px;letter-spacing:0.6px">http</div>
<svg style="left:1176px;top:196px" width="14" height="14" viewBox="0 0 14 14"><circle cx="7" cy="7" r="7" fill="#4fae05"/><path d="M5.1 2.1H5.8L5.5 5.7H3.9Z" fill="#fff"/><path d="M8.2 2.1H8.9L10.1 5.7H8.5Z" fill="#fff"/><path d="M2 7.1H12L11.4 8.3H10.9V10.9H9.1V8.3H4.9V10.9H3.1V8.3H2.6Z" fill="#fff"/></svg>
<div class="ct" style="left:1199px;top:196.8px;letter-spacing:0.1px">Accept</div>
<div class="abs" style="left:1322px;top:202px;width:11px;height:3px;background:#7a7a7a;border-radius:1px"></div>
<div class="ct" style="left:1344px;top:196.8px;letter-spacing:0.4px">None</div>
<svg style="left:1442.5px;top:201px" width="9" height="9" viewBox="-4.5 -4.5 9 9"><path d="M-4 0H4M-2 -3.5L2 3.5M2 -3.5L-2 3.5" stroke="#7d7d7d" stroke-width="1.35"/></svg>
<div class="ct" style="left:1463px;top:199.2px;letter-spacing:0.04px">Policy Targets</div>
<div class="row">
<div class="cell" style="left:294px;top:219px;width:79px;background:#f0f1f3"></div>
<div class="cell" style="left:373px;top:219px;width:180px;"></div>
<div class="cell" style="left:553px;top:219px;width:184px;"></div>
<div class="cell" style="left:737px;top:219px;width:177px;"></div>
<div class="cell" style="left:914px;top:219px;width:110px;"></div>
<div class="cell" style="left:1024px;top:219px;width:147px;"></div>
<div class="cell" style="left:1171px;top:219px;width:145px;"></div>
<div class="cell" style="left:1316px;top:219px;width:116px;"></div>
<div class="cell" style="left:1432px;top:219px;width:447px;"></div>
</div>
<div class="ct" style="left:310px;top:223.8px">4</div>
<div class="ct" style="left:378.5px;top:223.8px;letter-spacing:0.25px">cleanup rule</div>
<svg style="left:563.5px;top:228px" width="9" height="9" viewBox="-4.5 -4.5 9 9"><path d="M-4 0H4M-2 -3.5L2 3.5M2 -3.5L-2 3.5" stroke="#7d7d7d" stroke-width="1.35"/></svg>
<div class="ct" style="left:584px;top:226.2px">Any</div>
<svg style="left:747.5px;top:228px" width="9" height="9" viewBox="-4.5 -4.5 9 9"><path d="M-4 0H4M-2 -3.5L2 3.5M2 -3.5L-2 3.5" stroke="#7d7d7d" stroke-width="1.35"/></svg>
<div class="ct" style="left:768px;top:226.2px;letter-spacing:0.1px">Any</div>
<svg style="left:924.5px;top:228px" width="9" height="9" viewBox="-4.5 -4.5 9 9"><path d="M-4 0H4M-2 -3.5L2 3.5M2 -3.5L-2 3.5" stroke="#7d7d7d" stroke-width="1.35"/></svg>
<div class="ct" style="left:945px;top:226.2px">Any</div>
<svg style="left:1034.5px;top:228px" width="9" height="9" viewBox="-4.5 -4.5 9 9"><path d="M-4 0H4M-2 -3.5L2 3.5M2 -3.5L-2 3.5" stroke="#7d7d7d" stroke-width="1.35"/></svg>
<div class="ct" style="left:1055.5px;top:226.2px;letter-spacing:0px">Any</div>
<svg style="left:1176px;top:223px" width="14" height="14" viewBox="0 0 14 14"><circle cx="7" cy="7" r="7" fill="#f04d4d"/><circle cx="7" cy="7" r="4.9" fill="none" stroke="#fff" stroke-width="1.3"/></svg>
<div class="ct" style="left:1199px;top:223.8px;letter-spacing:0.45px">Drop</div>
<div class="abs" style="left:1322px;top:229px;width:11px;height:3px;background:#7a7a7a;border-radius:1px"></div>
<div class="ct" style="left:1344px;top:223.8px;letter-spacing:0.4px">None</div>
<svg style="left:1442.5px;top:228px" width="9" height="9" viewBox="-4.5 -4.5 9 9"><path d="M-4 0H4M-2 -3.5L2 3.5M2 -3.5L-2 3.5" stroke="#7d7d7d" stroke-width="1.35"/></svg>
<div class="ct" style="left:1463px;top:226.2px;letter-spacing:0.04px">Policy Targets</div>
<div class="abs" style="left:1878px;top:138px;width:1px;height:108px;background:#dde1e8"></div>
<div class="abs" style="left:1689px;top:308px;width:1.5px;height:1.5px;background:#2a3cf0;border-radius:1px"></div><!--TABLE_END-->
<div class="abs" style="left:294px;top:733px;width:1585px;height:268px;border:1px solid #dde1e8;background:#fff"></div>
<div class="abs" style="left:295px;top:734px;width:1583px;height:31px;background:#f7f7f7;border-bottom:1px solid #dde1e8"></div>
<div class="abs" style="left:304px;top:738px;width:74px;height:27px;background:#fff;border:1px solid #dde1e8;border-bottom:none"></div>
<div class="t" style="left:316px;top:745.5px;font-weight:bold;letter-spacing:-0.2px;color:#1f2430">Summary</div>
<div class="t" style="left:390px;top:744.5px;letter-spacing:0.1px">Details</div>
<div class="abs" style="left:447px;top:742px;width:1px;height:17px;background:#dde1e8"></div>
<div class="t" style="left:460px;top:744.5px;letter-spacing:0px">Logs</div>
<div class="abs" style="left:517px;top:742px;width:1px;height:17px;background:#dde1e8"></div>
<div class="t" style="left:530px;top:744.5px;letter-spacing:0.25px">History</div>
<div class="abs" style="left:587px;top:742px;width:1px;height:17px;background:#dde1e8"></div>
<svg style="left:1868.7px;top:738px" width="6" height="7" viewBox="0 0 6 7"><path d="M0 0H5.6L2.8 3ZM0 4H5.6L2.8 7Z" fill="#2b3a55"/></svg>
<svg style="left:1857px;top:777px" width="12" height="12" viewBox="0 0 12 12" fill="#2b3a55"><path d="M0 1.7L1.7 0L2.8 1.1L1.1 2.8Z"/><path d="M1.7 3.4L3.4 1.7L10 8.3L8.3 10Z"/><path d="M8.8 10.5L10.5 8.8L12.2 12.2Z"/></svg>
<!-- left -->
<svg style="left:328.5px;top:803.5px" width="21" height="21" viewBox="0 0 14 14"><circle cx="7" cy="7" r="7" fill="#4fae05"/><path d="M5.1 2.1H5.8L5.5 5.7H3.9Z" fill="#fff"/><path d="M8.2 2.1H8.9L10.1 5.7H8.5Z" fill="#fff"/><path d="M2 7.1H12L11.4 8.3H10.9V10.9H9.1V8.3H4.9V10.9H3.1V8.3H2.6Z" fill="#fff"/></svg>
<div class="t" style="left:359px;top:808px;font-weight:bold;letter-spacing:-0.25px">Accept</div>
<div class="t" style="left:327px;top:842px;font-size:18px;line-height:22px;color:#2b3a55;letter-spacing:-0.45px;-webkit-text-stroke:0.5px #2b3a55">Rule 1</div>
<div class="t" style="left:327.5px;top:882px;letter-spacing:-0.05px">Comments:</div>
<div class="abs" style="left:394px;top:882px;width:278px;height:40px;border:1px solid #c5c6cc;background:#fff"></div>
<div class="abs" style="left:687px;top:796px;width:1px;height:121px;background-image:linear-gradient(to bottom,#a3a9c6 1.4px,transparent 1.4px);background-size:1px 3px"></div>
<!-- middle -->
<svg style="left:703.5px;top:795px" width="21" height="21" viewBox="0 0 21 21" fill="#2b3a55">
  <path d="M10.5 1.2C13.6 1.2 15.4 3.4 15.4 6.6C15.4 9.6 14.4 11.6 13 12.8V15.2C15.6 16 19 17 20.4 18.6V21H0.6V18.6C2 17 5.4 16 8 15.2V12.8C6.6 11.6 5.6 9.6 5.6 6.6C5.6 3.4 7.4 1.2 10.5 1.2Z"/><path d="M9 2L12 0L11.4 2Z"/>
</svg>
<div class="t" style="left:735.5px;top:800px">Created by:</div>
<div class="t" style="left:827.5px;top:800px;font-weight:bold">aa</div>
<svg style="left:704px;top:828px" width="21" height="21" viewBox="0 0 21 21" fill="#2b3a55">
  <path d="M0 2.6H21V21H0Z"/><rect x="1.7" y="5.8" width="17.6" height="13.6" fill="#fff"/>
  <g fill="#fff"><rect x="3.4" y="2.6" width="2.2" height="1.4"/><rect x="9.4" y="2.6" width="2.2" height="1.4"/><rect x="15.4" y="2.6" width="2.2" height="1.4"/></g>
  <g><rect x="3.9" y="0" width="1.2" height="3.4"/><rect x="9.9" y="0" width="1.2" height="3.4"/><rect x="15.9" y="0" width="1.2" height="3.4"/></g>
  <g><rect x="3.3" y="7.4" width="2.7" height="2.6"/><rect x="7.4" y="7.4" width="2.7" height="2.6"/><rect x="11.5" y="7.4" width="2.7" height="2.6"/><rect x="15.6" y="7.4" width="2.7" height="2.6"/><rect x="3.3" y="11.3" width="2.7" height="2.6"/><rect x="7.4" y="11.3" width="2.7" height="2.6"/><rect x="11.5" y="11.3" width="2.7" height="2.6"/><rect x="15.6" y="11.3" width="2.7" height="2.6"/><rect x="3.3" y="15.2" width="2.7" height="2.6"/><rect x="7.4" y="15.2" width="2.7" height="2.6"/><rect x="11.5" y="15.2" width="2.7" height="2.6"/></g>
</svg>
<div class="t" style="left:735.5px;top:832px;letter-spacing:0.12px">Date created:</div>
<div class="t" style="left:827.5px;top:832px;font-weight:bold;letter-spacing:0.24px">2/4/2025 11:27 AM</div>
<svg style="left:703px;top:859px" width="22" height="22" viewBox="0 0 22 22"><circle cx="11" cy="11" r="9.8" fill="none" stroke="#2b3a55" stroke-width="1.9"/><path d="M10.6 4.6V11.6L14.6 15.6" fill="none" stroke="#2b3a55" stroke-width="1.8"/></svg>
<div class="t" style="left:735.5px;top:864px;letter-spacing:0.2px">Expiration time:</div>
<div class="t" style="left:827.5px;top:864px;font-weight:bold">Never</div>
<svg style="left:704px;top:892px" width="21" height="21" viewBox="0 0 21 21"><circle cx="10.5" cy="10.5" r="8.6" fill="none" stroke="#2b3a55" stroke-width="3.8"/><circle cx="10.5" cy="10.5" r="3" fill="#2b3a55"/></svg>
<div class="t" style="left:735.5px;top:896px;letter-spacing:0.15px">Hit Count:</div>
<div class="abs" style="left:827px;top:899px;width:40px;height:7px;background:#d5d5d6;background-image:linear-gradient(to right,transparent 9px,#e3e3e4 9px,#e3e3e4 10px,transparent 10px);background-size:10px 7px"></div>
<div class="t" style="left:871px;top:896px;font-weight:bold">0 (0%, Zero)</div>
<div class="abs" style="left:1089px;top:796px;width:1px;height:121px;background-image:linear-gradient(to bottom,#a3a9c6 1.4px,transparent 1.4px);background-size:1px 3px"></div>
<!-- right -->
<svg width="0" height="0" style="left:0;top:0"><defs><g id="note">
  <rect x="0" y="2.2" width="17" height="19.8" rx="1.2" fill="#1f2f50"/><rect x="2" y="5" width="13" height="14.8" rx="0.8" fill="#fff"/>
  <g fill="#fff"><circle cx="3.4" cy="2.7" r="1.25"/><circle cx="8.45" cy="2.7" r="1.25"/><circle cx="13.5" cy="2.7" r="1.25"/></g>
  <g fill="#1f2f50"><rect x="2.9" y="0" width="1" height="3"/><rect x="7.95" y="0" width="1" height="3"/><rect x="13" y="0" width="1" height="3"/></g>
  <path d="M3.3 8.6L5.5 6.4L6.6 7.5L4.4 9.7Z" fill="#2b3a55"/><path d="M5 10.3L7.2 8.1L12.9 13.8V16.9H10.8Z" fill="#2b3a55"/><rect x="4.1" y="16" width="4.8" height="1" fill="#2b3a55"/>
</g></defs></svg>
<svg style="left:1107px;top:801px" width="17" height="22" viewBox="0 0 17 22"><use href="#note"/></svg>
<div class="t" style="left:1133px;top:806px;letter-spacing:0.4px">Additional Rule Info:</div>
<div class="abs" style="left:1255px;top:802px;width:601px;height:21px;border:1px solid #c5c6cc;background:#fff"></div>
<svg style="left:1107px;top:837px" width="17" height="22" viewBox="0 0 17 22"><use href="#note"/></svg>
<div class="t" style="left:1133px;top:842px;letter-spacing:0.2px">Ticket Number:</div>
<div class="abs" style="left:1255px;top:838px;width:601px;height:21px;border:1px solid #c5c6cc;background:#fff"></div>
<svg style="left:1107px;top:873px" width="17" height="22" viewBox="0 0 17 22"><use href="#note"/></svg>
<div class="t" style="left:1133px;top:878px;letter-spacing:0.1px">Ticket Requester:</div>
<div class="abs" style="left:1255px;top:874px;width:601px;height:21px;border:1px solid #c5c6cc;background:#fff"></div>

<svg style="left:1902px;top:49px" width="8" height="6" viewBox="0 0 8 6"><path d="M3.2 0V5L0 2.5ZM7.2 0V5L4 2.5Z" fill="#b3bbce"/></svg>
<div class="abs" style="left:1893px;top:59px;width:26px;height:55px;background:#56304a"></div>
<div class="abs vt" style="left:1899px;top:66px;color:#e6ebf7">Objects</div>
<div class="abs vt" style="left:1899px;top:121px;color:#b3bbce;letter-spacing:0.15px">Validations</div>
<div class="abs vt" style="left:1899px;top:190px;color:#b3bbce;letter-spacing:0.35px">AI Copilot</div>

<div class="badge" style="left:259px;top:5px"><svg style="left:13.8px;top:8.6px" width="10" height="22" viewBox="0 0 10 22"><path d="M5.9 0H8.8V21.6H5.9V3.6Q3.4 5.9 0.2 7V4.3Q4 2.8 5.9 0Z" fill="#fff"/></svg></div>
<div class="badge" style="left:753px;top:3px">2</div>
<div class="badge" style="left:12px;top:474px">3</div>
<div class="badge" style="left:1844px;top:68px">4</div>
<div class="badge" style="left:1842px;top:133px">5</div>
<div class="badge" style="left:1842px;top:198px">6</div>
<div class="badge" style="left:14px;top:816px">7</div>

</body>
</html>
